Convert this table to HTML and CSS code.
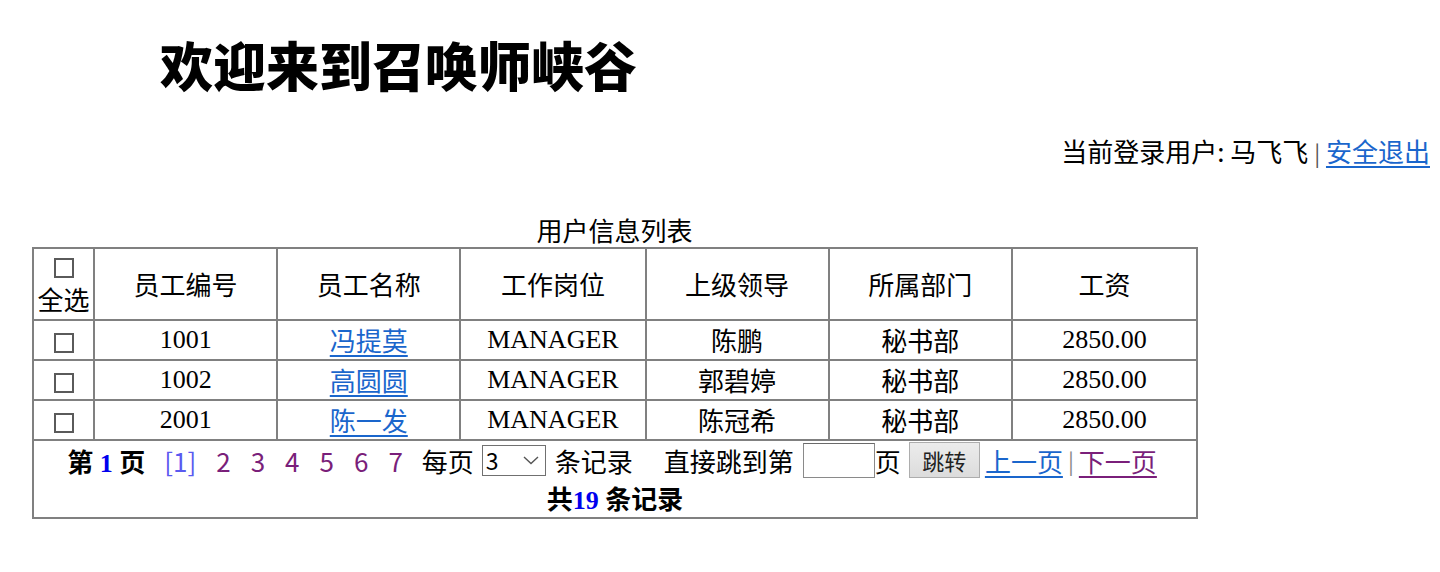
FILE: index.html
```html
<!DOCTYPE html>
<html lang="zh">
<head>
<meta charset="utf-8">
<title>用户信息列表</title>
<link rel="stylesheet" href="styles.css">
</head>
<body>
<h1 class="title">欢迎来到召唤师峡谷</h1>
<div class="userbar">当前登录用户:&nbsp;马飞飞 <span class="sep">|</span> <a href="#" class="link">安全退出</a></div>
<div class="caption">用户信息列表</div>
<table class="grid">
  <colgroup>
    <col class="c0"><col class="c1"><col class="c2"><col class="c3"><col class="c4"><col class="c5"><col class="c6">
  </colgroup>
  <tr class="head">
    <td class="selall"><span class="cb"></span><span class="sa">全选</span></td>
    <td>员工编号</td>
    <td>员工名称</td>
    <td>工作岗位</td>
    <td>上级领导</td>
    <td>所属部门</td>
    <td>工资</td>
  </tr>
  <tr class="row">
    <td><span class="cb"></span></td>
    <td class="num">1001</td>
    <td><a href="#" class="link">冯提莫</a></td>
    <td class="num">MANAGER</td>
    <td>陈鹏</td>
    <td>秘书部</td>
    <td class="num">2850.00</td>
  </tr>
  <tr class="row">
    <td><span class="cb"></span></td>
    <td class="num">1002</td>
    <td><a href="#" class="link">高圆圆</a></td>
    <td class="num">MANAGER</td>
    <td>郭碧婷</td>
    <td>秘书部</td>
    <td class="num">2850.00</td>
  </tr>
  <tr class="row">
    <td><span class="cb"></span></td>
    <td class="num">2001</td>
    <td><a href="#" class="link">陈一发</a></td>
    <td class="num">MANAGER</td>
    <td>陈冠希</td>
    <td>秘书部</td>
    <td class="num">2850.00</td>
  </tr>
  <tr class="foot">
    <td colspan="7">
      <div class="pager">
        <b class="cur">第 <span class="blue">1</span> 页</b>
        <span class="pages"><span class="now">[1]</span><a href="#">2</a><a href="#">3</a><a href="#">4</a><a href="#">5</a><a href="#">6</a><a href="#">7</a></span>
        <span class="per">每页</span>
        <span class="select"><span class="sv">3</span><svg width="18" height="12" viewBox="0 0 18 12"><path d="M2 3 L9 9.5 L16 3" fill="none" stroke="#555" stroke-width="1.4"/></svg></span>
        <span class="rec">条记录</span>
        <span class="jump">直接跳到第</span><span class="box"></span><span>页</span>
        <span class="btn">跳转</span>
        <a href="#" class="link">上一页</a><span class="sep2">|</span><a href="#" class="link visited">下一页</a>
      </div>
      <div class="total"><b>共<span class="blue">19</span> 条记录</b></div>
    </td>
  </tr>
</table>
</body>
</html>
```

FILE: styles.css
```css
html, body {
  margin: 0;
  padding: 0;
  background: #ffffff;
}
body {
  font-family: "Liberation Serif", "Noto Sans CJK SC", serif;
  font-size: 26px;
  color: #000;
}
.title {
  margin: 32px 0 0 160px;
  font-family: "Noto Sans CJK SC", sans-serif;
  font-size: 53px;
  line-height: 64px;
  font-weight: 900;
  letter-spacing: 0;
}
.userbar {
  margin-top: 37px;
  text-align: right;
  padding-right: 10px;
  font-family: "Noto Sans CJK SC", sans-serif;
  font-size: 26px;
  line-height: 36px;
}
.sep {
  color: #555;
  font-size: 22px;
}
.link {
  color: #1a66cc;
  text-decoration: underline;
  text-decoration-thickness: 2px;
  text-underline-offset: 4px;
}
.link.visited {
  color: #7a1f7a;
}
.caption {
  margin-top: 43px;
  width: 1165px;
  margin-left: 32px;
  text-align: center;
  font-family: "Noto Sans CJK SC", sans-serif;
  font-size: 26px;
  line-height: 34px;
}
.grid {
  margin-left: 32px;
  width: 1166px;
  border-collapse: collapse;
  table-layout: fixed;
  border: 2px solid #808080;
}
.grid td {
  border: 2px solid #808080;
  padding: 0;
  text-align: center;
  vertical-align: middle;
  font-family: "Liberation Serif", "Noto Sans CJK SC", serif;
}
.c0 { width: 61px; }
.c1 { width: 183px; }
.c2 { width: 183px; }
.c3 { width: 185px; }
.c4 { width: 183px; }
.c5 { width: 183px; }
.c6 { width: 185px; }
.head td {
  height: 70px;
  font-family: "Noto Sans CJK SC", sans-serif;
  line-height: 30px;
}
.selall {
  line-height: 26px;
}
.selall .cb {
  margin-top: -4px;
}
.sa {
  display: block;
  line-height: 36px;
}
.row td {
  height: 38px;
  line-height: 36px;
}
.row td:not(.num) {
  font-family: "Noto Sans CJK SC", sans-serif;
}
.cb {
  display: inline-block;
  width: 20px;
  height: 20px;
  box-sizing: border-box;
  border: 2px solid #5a5a5a;
  background: #fff;
  vertical-align: middle;
}
.row .cb {
  margin-top: -2px;
}
.foot td {
  height: 76px;
  padding: 0;
}
.pager {
  display: flex;
  align-items: center;
  justify-content: center;
  height: 38px;
  margin-top: 0;
  padding-right: 6px;
  font-family: "Liberation Serif", "Noto Sans CJK SC", serif;
}
.cur {
  font-family: "Liberation Serif", "Noto Sans CJK SC", serif;
  font-weight: 700;
  margin-right: 19px;
}
.blue {
  color: #0000ee;
}
.pages {
  display: flex;
  gap: 20px;
  margin-right: 19px;
}
.now {
  color: #5a5af0;
}
.pages a {
  color: #7a1f7a;
  text-decoration: none;
}
.per {
  font-family: "Noto Sans CJK SC", sans-serif;
  margin-right: 8px;
}
.select {
  display: inline-flex;
  align-items: center;
  justify-content: space-between;
  width: 64px;
  height: 31px;
  box-sizing: border-box;
  border: 1px solid #707070;
  padding: 0 5px 0 3px;
  font-family: "Liberation Sans", sans-serif;
  font-size: 23px;
  margin-right: 9px;
}
.rec {
  font-family: "Noto Sans CJK SC", sans-serif;
  margin-right: 31px;
}
.jump, .pager > span {
  font-family: "Noto Sans CJK SC", sans-serif;
}
.jump {
  margin-right: 9px;
}
.box {
  display: inline-block;
  width: 72px;
  height: 35px;
  box-sizing: border-box;
  border: 1px solid #8a8a8a;
  border-top-color: #6a6a6a;
  background: #fff;
}
.btn {
  display: inline-flex;
  align-items: center;
  justify-content: center;
  width: 71px;
  height: 36px;
  box-sizing: border-box;
  margin-left: 8px;
  margin-right: 5px;
  border: 1px solid #adadad;
  background: linear-gradient(#ececec, #dcdcdc);
  font-family: "Noto Sans CJK SC", sans-serif;
  font-size: 22px;
  color: #222;
}
.pager .link {
  font-family: "Noto Sans CJK SC", sans-serif;
}
.sep2 {
  color: #888;
  font-size: 22px;
  margin: 0 5px;
}
.total {
  margin-top: 6px;
  height: 32px;
  line-height: 32px;
  font-family: "Liberation Serif", "Noto Sans CJK SC", serif;
}
.total b {
  font-weight: 700;
}
```
